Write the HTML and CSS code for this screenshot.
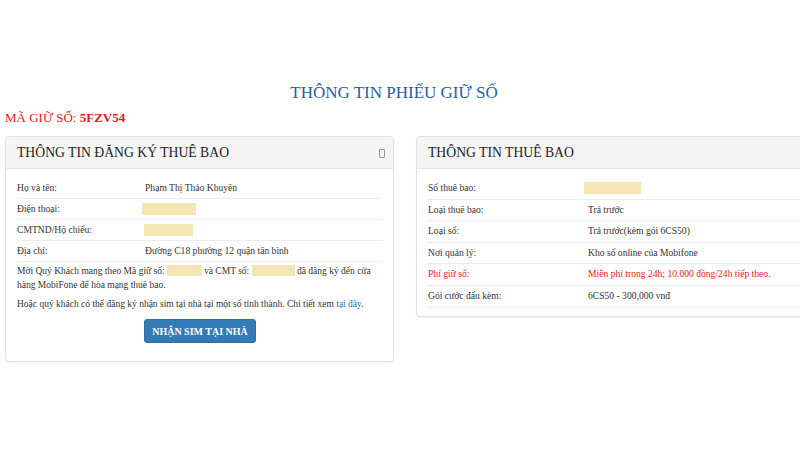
FILE: index.html
```html
<!DOCTYPE html>
<html lang="vi">
<head>
<meta charset="utf-8">
<title>Thông tin phiếu giữ số</title>
<link rel="stylesheet" href="styles.css">
</head>
<body>
<div class="page">
  <h1 class="title">THÔNG TIN PHIẾU GIỮ SỐ</h1>
  <div class="code">MÃ GIỮ SỐ: <b>5FZV54</b></div>
  <div class="cols">
    <div class="panel left">
      <div class="phead"><span>THÔNG TIN ĐĂNG KÝ THUÊ BAO</span><i class="ico"></i></div>
      <div class="pbody">
        <table class="info">
          <tr><td class="lab">Họ và tên:</td><td>Phạm Thị Thảo Khuyên</td></tr>
          <tr><td class="lab">Điện thoại:</td><td><span class="mask m1"></span></td></tr>
          <tr><td class="lab">CMTND/Hộ chiếu:</td><td><span class="mask m2"></span></td></tr>
          <tr><td class="lab">Địa chỉ:</td><td>Đường C18 phường 12 quận tân bình</td></tr>
        </table>
        <p class="txt first">Mời Quý Khách mang theo Mã giữ số:<span class="mask m3"></span> và CMT số: <span class="mask m4"></span> đã đăng ký đến cửa hàng MobiFone để hòa mạng thuê bao.</p>
        <p class="txt">Hoặc quý khách có thể đăng ký nhận sim tại nhà tại một số tỉnh thành. Chi tiết xem <a href="#">tại đây</a>.</p>
        <div class="btnrow"><button class="btn">NHẬN SIM TẠI NHÀ</button></div>
      </div>
    </div>
    <div class="panel right">
      <div class="phead"><span>THÔNG TIN THUÊ BAO</span><i class="ico"></i></div>
      <div class="pbody">
        <table class="info wide">
          <tr><td class="lab">Số thuê bao:</td><td><span class="mask m5"></span></td></tr>
          <tr><td class="lab">Loại thuê bao:</td><td>Trả trước</td></tr>
          <tr><td class="lab">Loại số:</td><td>Trả trước(kèm gói 6CS50)</td></tr>
          <tr><td class="lab">Nơi quản lý:</td><td>Kho số online của Mobifone</td></tr>
          <tr class="red"><td class="lab">Phí giữ số:</td><td>Miễn phí trong 24h; 10.000 đồng/24h tiếp theo.</td></tr>
          <tr class="last"><td class="lab">Gói cước đấu kèm:</td><td>6CS50 - 300,000 vnđ</td></tr>
        </table>
      </div>
    </div>
  </div>
</div>
</body>
</html>
```
FILE: styles.css
```css
html, body { margin: 0; padding: 0; background: #fff; }
body { font-family: "Liberation Serif", "Times New Roman", serif; color: #333; overflow: hidden; width: 800px; height: 450px; }
.page { padding-top: 81px; width: 800px; }
.title { margin: 0; text-align: center; font-weight: normal; font-size: 17px; line-height: 24px; color: #1f5fa6; padding-right: 12px; }
.code { margin: 4px 0 0 5px; font-size: 13px; line-height: 18px; color: #e0191c; }
.code b { font-weight: bold; }
.cols { display: flex; gap: 22px; margin-top: 9px; padding-left: 5px; align-items: flex-start; }
.panel { border: 1px solid #e2e2e2; border-radius: 4px; box-shadow: 0 1px 2px rgba(0,0,0,0.06); background: #fff; flex: none; }
.panel.left { width: 387px; }
.panel.right { width: 400px; }
.phead { height: 31px; background: #f5f5f5; border-bottom: 1px solid #e6e6e6; display: flex; align-items: center; justify-content: space-between; padding: 0 8px 0 11px; font-size: 13.7px; color: #222; border-radius: 4px 4px 0 0; }
.panel.right .phead { padding-right: 1px; }
.ico { display: block; width: 4px; height: 7px; border: 1px solid #999; border-radius: 1px; margin-top: 2px; }
.pbody { padding: 9px 0 0; }
.info { border-collapse: collapse; width: calc(100% - 22px); margin: 0 11px; font-size: 9.6px; }
.info td { padding: 4px 0; height: 12px; line-height: 12px; border-top: 1px solid #ececec; vertical-align: top; }
.info.wide td { height: 12.6px; line-height: 12.6px; }
.info tr:first-child td { border-top: none; }
.info .lab { width: 128px; }
.info.wide .lab { width: 160px; }
.info tr.last td { border-bottom: 1px solid #ececec; }
.panel.right .pbody { padding-bottom: 8px; }
.red td { color: #e0191c; }
.mask { display: inline-block; background: #f3e6b3; height: 12px; }
.info .mask { vertical-align: top; }
.txt .mask { height: 11px; vertical-align: -2px; }
.m1 { width: 54px; margin-left: -3px; }
.m2 { width: 49px; margin-left: -1px; }
.m3 { width: 35px; margin-left: 2px; }
.m4 { width: 43px; }
.m5 { width: 57px; margin-left: -4px; }
.txt { margin: 0 11px; font-size: 9.5px; line-height: 14px; }
.txt.first { border-top: 1px solid #ececec; padding-top: 2px; }
.txt + .txt { margin-top: 5px; }
.txt a { color: #2a6fb3; text-decoration: none; }
.btnrow { padding: 8px 0 18px 138px; }
.btn { font-family: "Liberation Serif", "Times New Roman", serif; font-size: 10px; font-weight: bold; color: #fff; background: #337ab7; border: 1px solid #2e6da4; border-radius: 3px; height: 24px; width: 112px; padding: 0; letter-spacing: 0; }
```
